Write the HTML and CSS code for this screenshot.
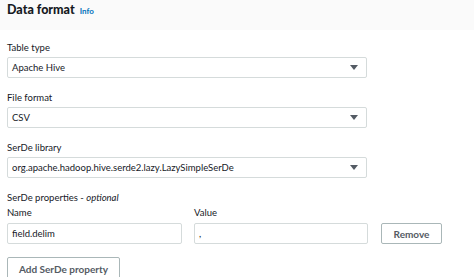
FILE: index.html
```html
<!DOCTYPE html>
<html lang="en">
<head>
    <meta charset="UTF-8">
    <title>Data format</title>
    <link rel="stylesheet" href="styles.css">
</head>
<body>
    <div class="header">
        <h2>Data format</h2>
        <a class="info" href="#">Info</a>
    </div>
    <div class="content">
        <div class="field">
            <label>Table type</label>
            <div class="select">
                <span>Apache Hive</span>
                <span class="caret"></span>
            </div>
        </div>
        <div class="field">
            <label>File format</label>
            <div class="select">
                <span>CSV</span>
                <span class="caret"></span>
            </div>
        </div>
        <div class="field">
            <label>SerDe library</label>
            <div class="select">
                <span>org.apache.hadoop.hive.serde2.lazy.LazySimpleSerDe</span>
                <span class="caret"></span>
            </div>
        </div>
        <div class="props">
            <div class="props-title">SerDe properties - <i>optional</i></div>
            <div class="prop-row">
                <div class="col">
                    <label>Name</label>
                    <div class="input">field.delim</div>
                </div>
                <div class="col">
                    <label>Value</label>
                    <div class="input">,</div>
                </div>
                <button class="btn remove">Remove</button>
            </div>
            <button class="btn add">Add SerDe property</button>
        </div>
    </div>
</body>
</html>
```
FILE: styles.css
```css
body {
    margin: 0;
    background-color: #fff;
    color: #16191f;
    font-family: Lato, 'Open Sans', sans-serif;
    font-size: 9.5px;
}
.header {
    background-color: #fafafa;
    height: 30px;
    padding: 1px 7px 0;
    display: flex;
    align-items: flex-start;
    gap: 5px;
    box-sizing: border-box;
}
.header h2 {
    margin: 0;
    font-size: 12.5px;
    font-weight: 900;
    line-height: 18px;
}
.info {
    color: #0073bb;
    font-size: 8px;
    font-weight: 700;
    text-decoration: none;
    line-height: 20px;
}
.content {
    padding: 10px 7px 0;
}
.field {
    margin-bottom: 12px;
}
label {
    display: block;
    line-height: 16px;
    margin-bottom: 1px;
}
.select, .input {
    height: 21px;
    box-sizing: border-box;
    border: 1px solid #d5dbdb;
    border-radius: 2px;
    display: flex;
    align-items: center;
    justify-content: space-between;
    padding: 0 8px 0 4px;
}
.select {
    width: 360px;
}
.caret {
    width: 0;
    height: 0;
    border-left: 4px solid transparent;
    border-right: 4px solid transparent;
    border-top: 5px solid #545b64;
}
.props-title {
    line-height: 15px;
    margin-top: 12px;
}
.props label {
    margin-bottom: 2px;
}
.prop-row {
    display: flex;
    align-items: flex-end;
    gap: 12px;
    margin-bottom: 13px;
}
.col {
    width: 175px;
}
.prop-row .col + .col {
    width: 174px;
}
.btn {
    font-family: inherit;
    font-size: 10px;
    font-weight: 700;
    color: #545b64;
    background: #fff;
    border: 1px solid #aab7b8;
    border-radius: 2px;
    height: 21px;
    padding: 0;
    white-space: nowrap;
}
.remove {
    width: 61px;
    margin-left: 1px;
}
.add {
    width: 113px;
    height: 24px;
}
```
